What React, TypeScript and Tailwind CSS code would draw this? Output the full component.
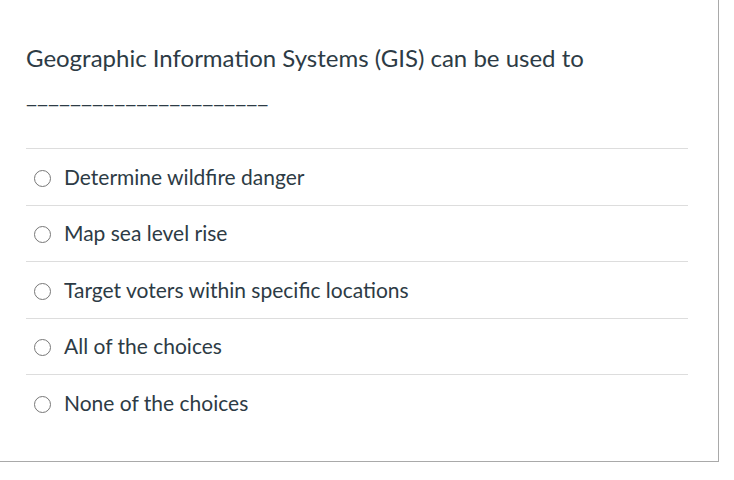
const choices = [
  { label: 'Determine wildfire danger', h: 'h-[57px]' },
  { label: 'Map sea level rise', h: 'h-[56px]' },
  { label: 'Target voters within specific locations', h: 'h-[57px]' },
  { label: 'All of the choices', h: 'h-[56px]' },
  { label: 'None of the choices', h: 'h-[57px]' },
];

export default function App() {
  return (
    <div className="w-[734px] h-[480px] bg-white font-['Lato',sans-serif] text-[#2d3b45]">
      <div className="w-[719px] h-[462px] border-r border-b border-[#a9a9a9] pl-[26px] pr-[30px]">
        <div className="pt-[42px] text-[24px] leading-[32px] text-[#2d3b45]">
          Geographic Information Systems (GIS) can be used to
        </div>
        <div className="pt-[4px] text-[24px] leading-[32px]">______________________</div>
        <div className="mt-[38px]">
          {choices.map((c) => (
            <label
              key={c.label}
              className={`flex items-center border-t border-[#dddddd] pl-[8px] ${c.h}`}
            >
              <span className="w-[17px] h-[17px] mt-[2px] rounded-full border-[1.5px] border-[#777777] bg-white shrink-0" />
              <span className="ml-[13px] mb-[1px] text-[21px] leading-[26px] text-[#2d3b45]">{c.label}</span>
            </label>
          ))}
        </div>
      </div>
    </div>
  );
}
